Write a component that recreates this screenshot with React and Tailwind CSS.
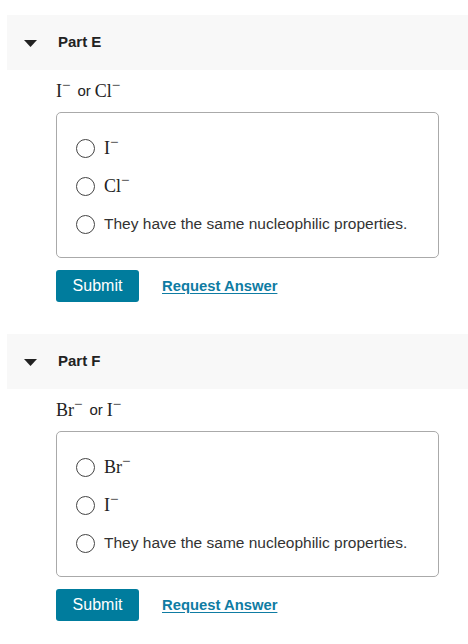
import React, { useState } from "react";

const Ion = ({ sym }) => (
  <span className="font-['Liberation_Serif',serif] text-[18px] text-[#222]">
    {sym}
    <span className="relative -top-[7px] text-[15px] leading-none">−</span>
  </span>
);

const Part = ({ title, question, options }) => {
  const [choice, setChoice] = useState(null);
  return (
    <div>
      {/* header band */}
      <div className="ml-[7px] h-[55px] bg-[#f8f8f8] flex items-center">
        <svg width="13" height="7" viewBox="0 0 13 7" className="ml-[17px] mt-[1px]">
          <polygon points="0,0 13,0 6.5,7" fill="#222" />
        </svg>
        <span className="ml-[21px] font-['Liberation_Sans',Arial,sans-serif] font-bold text-[15px] text-[#222]">
          {title}
        </span>
      </div>

      <div className="pl-[56px] pr-[29px]">
        <div className="mt-[10px] h-[22px] flex items-center text-[#222]">
          {question}
        </div>

        <div className="mt-[10px] border border-[#aaa] rounded-[5px] pt-[16px] pb-[14px] pl-[19px]">
          {options.map((opt, i) => (
            <label
              key={i}
              className="flex items-center h-[38px] cursor-pointer"
              onClick={() => setChoice(i)}
            >
              <span className="w-[19px] h-[19px] rounded-full border border-[#444] bg-white flex items-center justify-center">
                {choice === i && <span className="w-[9px] h-[9px] rounded-full bg-[#222]" />}
              </span>
              <span className="ml-[9px] font-['Liberation_Sans',Arial,sans-serif] text-[15.5px] text-[#333]">
                {opt}
              </span>
            </label>
          ))}
        </div>

        <div className="mt-[12px] flex items-center">
          <button className="w-[83px] h-[32px] rounded-[3px] bg-[#007c9d] text-white font-['Liberation_Sans',Arial,sans-serif] text-[16px]">
            Submit
          </button>
          <a className="ml-[23px] font-['Liberation_Sans',Arial,sans-serif] font-bold text-[14.8px] text-[#0f7ca3] underline underline-offset-2 cursor-pointer">
            Request Answer
          </a>
        </div>
      </div>
    </div>
  );
};

export default function App() {
  return (
    <div className="w-[468px] h-[644px] bg-white pt-[15px] overflow-hidden">
      <Part
        title="Part E"
        question={
          <>
            <Ion sym="I" />
            <span className="ml-[7px] font-['Liberation_Sans',Arial,sans-serif] text-[15px] mr-[4px]">or</span>
            <Ion sym="Cl" />
          </>
        }
        options={[
          <Ion sym="I" />,
          <Ion sym="Cl" />,
          "They have the same nucleophilic properties.",
        ]}
      />
      <div className="h-[32px]" />
      <Part
        title="Part F"
        question={
          <>
            <Ion sym="Br" />
            <span className="ml-[7px] font-['Liberation_Sans',Arial,sans-serif] text-[15px] mr-[4px]">or</span>
            <Ion sym="I" />
          </>
        }
        options={[
          <Ion sym="Br" />,
          <Ion sym="I" />,
          "They have the same nucleophilic properties.",
        ]}
      />
    </div>
  );
}
